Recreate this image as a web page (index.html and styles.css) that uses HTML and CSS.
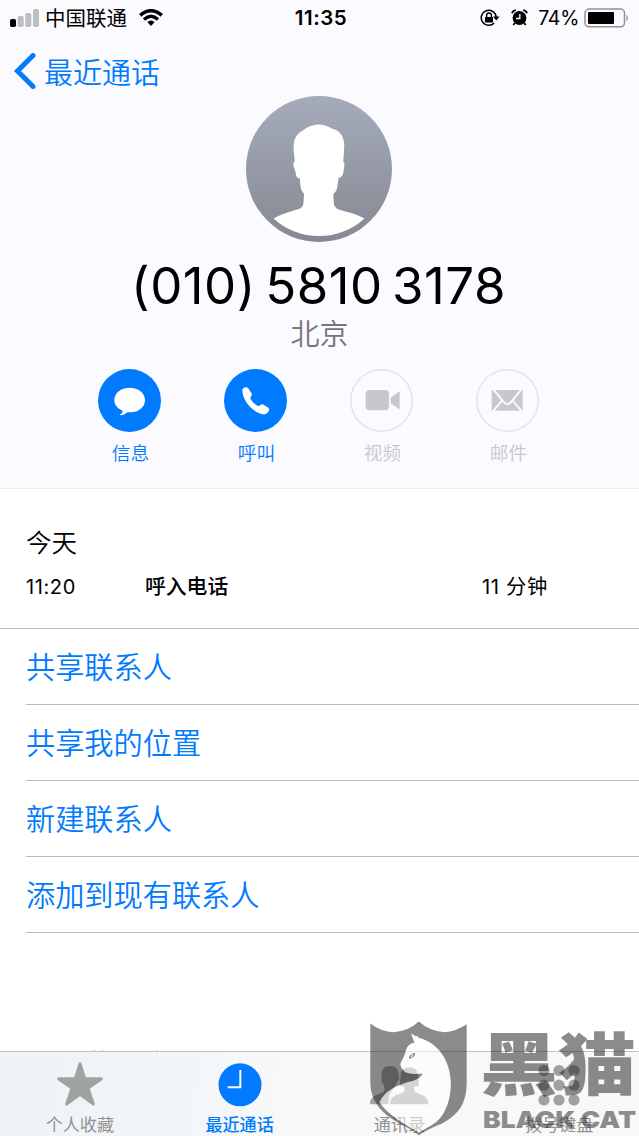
FILE: index.html
```html
<!DOCTYPE html>
<html lang="zh-CN">
<head>
  <meta charset="UTF-8">
  <title>最近通话</title>
  <link rel="stylesheet" href="styles.css">
</head>
<body>

<div class="phone">

  <!--头部-->
  <div class="header">
    <div class="status">
      <div class="status-left">
        <svg class="signal" width="29" height="18" viewBox="0 0 29 18">
          <rect x="0" y="10" width="6" height="8" rx="1.8"/>
          <g fill="#bdbdc2">
            <rect x="7.700" y="7" width="6" height="11" rx="1.800"/>
            <rect x="15.300" y="4" width="6" height="14" rx="1.800"/>
            <rect x="23" y="0" width="6" height="18" rx="1.800"/>
          </g>
        </svg>
        <span class="carrier">中国联通</span>
        <svg width="24" height="17" viewBox="0 0 24 17" fill="none" stroke="#000" stroke-width="3.400">
          <path d="M1.200 6.400Q12 -3 22.800 6.400"/>
          <path d="M5 10.400Q12 4 19 10.400"/>
          <path d="M8.300 13Q12 9.800 15.700 13L12 17Z" fill="#000" stroke="none"/>
        </svg>
      </div>
      <span class="time">11:35</span>
      <div class="status-right">
        <svg width="20" height="18" viewBox="0 0 20 18">
          <path d="M14.200 14A7.500 7.500 0 1 1 16.200 8" fill="none" stroke="#000" stroke-width="1.500"/>
          <path d="M13 7.500H19.500L16.300 11.500Z"/>
          <rect x="5" y="8" width="8" height="5.500" rx=".6"/>
          <path d="M6.600 8V6.400A2.400 2.400 0 0 1 11.400 6.400V8" fill="none" stroke="#000" stroke-width="1.400"/>
        </svg>
        <svg class="alarm" width="17" height="17" viewBox="0 0 17 17">
          <circle cx="8.500" cy="9" r="6.900"/>
          <path d="M1 4.300Q1.800 1.500 4.800 1.100M16 4.300Q15.200 1.500 12.200 1.100M3.800 14L2.300 16M13.200 14L14.700 16" fill="none" stroke="#000" stroke-width="1.800"/>
          <path d="M8.800 5V9.500H5" fill="none" stroke="#fafaff" stroke-width="1.300"/>
        </svg>
        <span class="percent">74%</span>
        <svg width="46" height="20" viewBox="0 0 46 20">
          <rect x="1" y="1" width="39.500" height="17.800" rx="4" fill="none" stroke="#929296" stroke-width="1.500"/>
          <rect x="4" y="4" width="26" height="12" rx="1"/>
          <path d="M42.500 6.500Q45.500 10 42.500 13.500Z" fill="#929296"/>
        </svg>
      </div>
    </div>

    <a class="back" href="#">
      <svg width="22" height="36" viewBox="0 0 22 36"><path d="M19 2.500L3.500 18L19 33.500" fill="none" stroke="#007aff" stroke-width="5" stroke-linecap="round"/></svg>
      <span>最近通话</span>
    </a>

    <svg class="avatar" viewBox="48 30 440 440">
      <defs>
        <linearGradient id="bg" x1="0" y1="0" x2="0" y2="1">
          <stop offset="0" stop-color="#a5abb9"/>
          <stop offset="1" stop-color="#858993"/>
        </linearGradient>
      </defs>
      <circle cx="268" cy="250" r="220" fill="url(#bg)"/>
      <path fill="#fff" d="M268 116C290 116 302 128 318 132C338 142 345 162 344 185L341 228C347 230 344 245 341 262C338 275 333 275 327 277L323 305C322 316 315 322 311 325L313 355C316 370 325 372 345 377C370 383 390 390 405 399A203 203 0 0 1 131 399C150 388 170 382 190 376C210 371 218 368 221 355L223 325C217 318 213 312 212 300L210 278C200 277 199 270 197 258C190 240 188 229 195 228C193 205 190 185 192 175C193 155 205 142 215 137C235 122 250 116 268 116Z"/>
    </svg>

    <h1 class="number">(010) 5810 3178</h1>
    <p class="city">北京</p>

    <!--四个按钮-->
    <div class="actions">
      <a class="action" href="#">
        <span class="circle">
          <svg width="63" height="63" viewBox="54 41 189 189" fill="#fff"><path d="M149 97C175 97 195 113 195 134C195 156 175 172 149 171L142 171C136 176 128 180 121 180C119 179 120 178 122 177C126 174 128 170 128 166C112 160 103 148 103 134C103 113 123 97 149 97Z"/></svg>
        </span>
        <span class="name">信息</span>
      </a>
      <a class="action" href="#">
        <span class="circle">
          <svg width="63" height="63" viewBox="432 41 189 189" fill="#fff"><path d="M487 105C486 100 494 95 500 96C506 98 509 106 514 113C518 118 514 122 511 127C511 135 527 150 536 152C540 151 543 146 548 147L565 157C570 160 567 165 565 169C560 177 552 178 544 176C518 168 488 139 487 105Z"/></svg>
        </span>
        <span class="name">呼叫</span>
      </a>
      <a class="action off" href="#">
        <span class="circle">
          <svg width="63" height="63" viewBox="61 42 189 189" fill="#c7c7cc"><rect x="108" y="105" width="70" height="61" rx="12"/><path d="M183 128L207 110Q210 109 210 112V160Q210 163 207 161L183 145Z"/></svg>
        </span>
        <span class="name">视频</span>
      </a>
      <a class="action off" href="#">
        <span class="circle">
          <svg width="63" height="63" viewBox="439 42 189 189"><path fill="#c7c7cc" d="M486 105H579V167H486Z"/><path d="M489 101L523 142Q533 153 543 142L577 101M489 170L517 137M577 170L549 137" fill="none" stroke="#fafaff" stroke-width="6"/></svg>
        </span>
        <span class="name">邮件</span>
      </a>
    </div>
  </div>

  <!--通话记录-->
  <div class="record">
    <h2 class="day">今天</h2>
    <div class="call">
      <span class="call-time">11:20</span>
      <span class="call-type">呼入电话</span>
      <span class="call-long">11 分钟</span>
    </div>
  </div>

  <ul class="list">
    <li><a href="#">共享联系人</a></li>
    <li><a href="#">共享我的位置</a></li>
    <li><a href="#">新建联系人</a></li>
    <li><a href="#">添加到现有联系人</a></li>
  </ul>
  <a class="block" href="#">阻止此来电号码</a>

  <!--底部标签栏-->
  <div class="tabbar">
    <a class="tab" href="#">
      <svg width="48" height="48" viewBox="168 90 144 144"><path d="M240 98L254 143H304L264 172L280 219L240 190L200 219L216 172L176 143H226Z" fill="#a1a3a3" stroke="#a1a3a3" stroke-width="9" stroke-linejoin="round"/></svg>
      <span>个人收藏</span>
    </a>
    <a class="tab on" href="#">
      <svg width="48" height="48" viewBox="649 92 144 144"><circle cx="721" cy="163.500" r="64.500" fill="#007aff"/><path d="M722 119V171H684" fill="none" stroke="#fff" stroke-width="6"/></svg>
      <span>最近通话</span>
    </a>
    <a class="tab" href="#">
      <svg class="people" width="60" height="48" viewBox="59 150 180 144">
        <path fill="#a1a1a1" d="M122 165C141 165 149 178 148 194C153 204 145 209 142 216C137 226 133 232 127 241C119 249 118 265 117 280H62C62 260 72 256 91 248C108 242 107 239 104 222C98 215 95 210 97 200C95 178 102 165 122 165Z"/>
        <path fill="#a1a1a1" d="M180 169C198 169 206 180 206 196C208 206 211 221 207 225L194 227C193 240 195 243 211 249C229 256 236 260 237 280H122C123 260 131 255 149 249C166 243 167 239 165 227L153 225C151 217 153 207 154 196C154 179 162 169 180 169Z"/>
      </svg>
      <span>通讯录</span>
    </a>
    <a class="tab" href="#">
      <svg width="48" height="48" viewBox="0 0 48 48" fill="#a1a1a1">
        <circle cx="9" cy="9.500" r="5.600"/><circle cx="24" cy="9.500" r="5.600"/><circle cx="39" cy="9.500" r="5.600"/>
        <circle cx="9" cy="24.200" r="5.600"/><circle cx="24" cy="24.200" r="5.600"/><circle cx="39" cy="24.200" r="5.600"/>
        <circle cx="9" cy="39" r="5.600"/><circle cx="24" cy="39" r="5.600"/><circle cx="39" cy="39" r="5.600"/>
      </svg>
      <span>拨号键盘</span>
    </a>
  </div>

  <!--水印-->
  <div class="mark">
    <svg class="shield" viewBox="60 33 292 345">
      <path fill="#231f20" fill-opacity=".52" fill-rule="evenodd" d="M61 40Q95 66 130 66Q175 64 207 34Q240 64 285 66Q318 64 351 42V215C351 290 320 316 275 342C250 352 225 364 207 376C185 355 140 340 110 315C80 290 61 260 61 215ZM184 70L194 98C181 100 172 108 168 121C166 136 159 144 153 157C149 168 157 176 167 187C183 193 202 193 219 190C214 202 204 208 190 212C151 222 105 238 89 278C117 318 164 342 207 368C225 358 244 348 260 336C292 307 304 260 303 216C301 157 270 99 204 82L203 76L198 79Z"/>
      <path fill="#fff" fill-opacity=".55" d="M184 70L194 98C181 100 172 108 168 121C166 136 159 144 153 157C149 168 157 176 167 187C183 193 202 193 219 190C214 202 204 208 190 212C151 222 105 238 89 278C117 318 164 342 207 368C225 358 244 348 260 336C292 307 304 260 303 216C301 157 270 99 204 82L203 76L198 79Z"/>
      <path fill="#8b888a" d="M177 142Q183 129 196 129Q195 142 180 147Z"/>
      <path fill="#fff" d="M185 133L189 132L187 143L184 144Z"/>
    </svg>
    <div class="mark-text">
      <span class="mark-cn">黑猫</span>
      <span class="mark-en">BLACK CAT</span>
    </div>
  </div>
</div>

</body>
</html>
```

FILE: styles.css
```css
* {
  margin: 0;
  padding: 0;
  list-style: none;
  box-sizing: border-box;
}

body {
  background-color: #fff;
  font-family: Inter, "Noto Sans CJK SC", sans-serif;
  color: #000;
}

a {
  color: #007aff;
  text-decoration: none;
}

svg {
  display: block;
  flex-shrink: 0;
}

.phone {
  position: relative;
  width: 639px;
  height: 1136px;
  overflow: hidden;
  display: flex;
  flex-direction: column;
}

.header {
  height: 489px;
  background-color: #fafaff;
  border-bottom: 1px solid #ececf0;
  display: flex;
  flex-direction: column;
  align-items: center;
}

/*状态栏*/
.status {
  width: 100%;
  height: 35px;
  padding: 0 9px 0 10px;
  display: grid;
  grid-template-columns: 1fr auto 1fr;
  align-items: center;
}

.status-left,
.status-right {
  display: flex;
  align-items: center;
}

.status-right {
  justify-content: flex-end;
}

.carrier {
  margin: 0 12px 0 6px;
  padding-top: 2px;
  font-size: 20.5px;
  line-height: 32px;
}

.time {
  margin-left: 2px;
  font-size: 20.5px;
  font-weight: 600;
  letter-spacing: .5px;
}

.alarm {
  margin: 0 10px 0 11px;
}

.percent {
  margin-right: 5px;
  font-size: 19.5px;
  letter-spacing: -.3px;
}

.back {
  width: 100%;
  height: 61px;
  padding: 13px 0 3px 14px;
  display: flex;
  align-items: center;
  gap: 8px;
  font-size: 29px;
  font-weight: 350;
}

.avatar {
  width: 146px;
  height: 146px;
  margin-right: 1px;
}

.number {
  margin: 13px 2px 0 0;
  font-size: 51px;
  font-weight: 400;
  line-height: 62px;
  word-spacing: -5.500px;
  letter-spacing: .5px;
  white-space: nowrap;
}

.city {
  margin-top: 2px;
  font-size: 29px;
  font-weight: 350;
  line-height: 32px;
  color: #77777b;
}

/*圆形按钮*/
.actions {
  margin: 18px 2px 0 0;
  display: flex;
  gap: 63px;
}

.action {
  width: 63px;
  text-align: center;
}

.circle {
  display: block;
  height: 63px;
  border-radius: 50%;
  background-color: #007aff;
}

.name {
  display: block;
  margin: 7px -1px 0 1px;
  font-size: 18.700px;
  font-weight: 350;
  line-height: 30px;
}

.off {
  color: #c7c7cc;
}

.off .circle {
  background-color: transparent;
  box-shadow: inset 0 0 0 1.500px #e3e3e8;
}

/*通话记录*/
.record {
  height: 140px;
  padding: 37px 26px 0;
  border-bottom: 1px solid #b8b8bb;
}

.day {
  font-size: 25.500px;
  font-weight: 350;
  line-height: 34px;
}

.call {
  margin-top: 12px;
  display: flex;
  font-size: 20px;
  line-height: 30px;
  letter-spacing: .6px;
}

.call-time {
  width: 119px;
}

.call-type {
  width: 337px;
  font-size: 20.800px;
  font-weight: 500;
  letter-spacing: 0;
}

.call-long {
  font-size: 20.300px;
}

.list {
  padding-left: 26px;
}

.list li {
  height: 76px;
  padding-top: 1px;
  border-bottom: 1px solid #b8b8bb;
  font-size: 29.200px;
  font-weight: 350;
  line-height: 75px;
}

.block {
  height: 45px;
  margin: 110px 0 0 26px;
  font-size: 29.200px;
  font-weight: 350;
  line-height: 45px;
}

/*底部*/
.tabbar {
  position: absolute;
  left: 0;
  bottom: 0;
  width: 100%;
  height: 85px;
  padding-top: 9px;
  border-top: 1px solid #bfc1c3;
  background: linear-gradient(100deg, #edf3f7 0, #f3f6f9 30%, #f8f8f8 45%);
  display: flex;
}

.tab {
  flex: 1;
  display: flex;
  flex-direction: column;
  align-items: center;
  font-size: 17.100px;
  line-height: 31px;
  color: #929292;
}

.on {
  color: #007aff;
  font-weight: 500;
}

/*水印*/
.mark {
  position: absolute;
  left: 370px;
  bottom: 0;
  display: flex;
  gap: 16px;
}

.shield {
  width: 97px;
  height: 115px;
}

.mark-text {
  display: flex;
  flex-direction: column;
  align-items: flex-start;
  color: rgba(35, 31, 32, .52);
  white-space: nowrap;
}

.mark-cn {
  margin-left: -3px;
  font-family: "Noto Sans CJK SC", sans-serif;
  font-size: 78px;
  font-weight: 900;
  line-height: 84px;
  transform: scaleY(.88);
  transform-origin: 50% 22%;
}

.mark-en {
  font-size: 23px;
  font-weight: 900;
  line-height: 30px;
  transform: scaleX(1.15);
  transform-origin: 0 50%;
}
```
